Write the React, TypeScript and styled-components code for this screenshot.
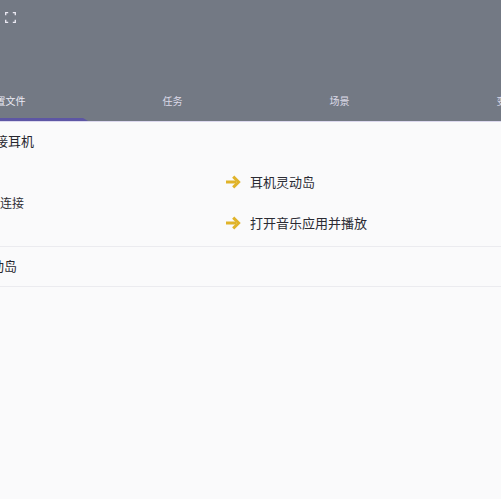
import React from "react";
import styled, { createGlobalStyle } from "styled-components";

const GlobalStyle = createGlobalStyle`
  html, body {
    margin: 0;
    padding: 0;
    background: #fafafb;
    overflow: hidden;
  }
  body {
    font-family: "Noto Sans CJK SC", "Noto Sans", sans-serif;
    color: #2b2b33;
  }
`;

const Page = styled.div`
  width: 501px;
  height: 499px;
  overflow: hidden;
  background: #fafafb;
`;

const Header = styled.header`
  height: 121px;
  background: #737984;
  border-bottom: 1px solid #dcd8ee;
  display: flex;
  flex-direction: column;
`;

const TopBar = styled.div`
  padding: 12px 0 0 5px;
  flex: 1;
`;

const IconButton = styled.div`
  width: 11px;
  height: 11px;
  display: flex;
`;

const Tabs = styled.nav`
  display: flex;
  margin-left: -78px;
`;

const Tab = styled.div<{ $active?: boolean }>`
  position: relative;
  flex: 0 0 167px;
  height: 38px;
  box-sizing: border-box;
  padding-bottom: 4px;
  display: flex;
  align-items: center;
  justify-content: center;
  font-size: 10px;
  color: ${(p) => (p.$active ? "#ecebf5" : "#dcd9e8")};
  &::after {
    content: "";
    display: ${(p) => (p.$active ? "block" : "none")};
    position: absolute;
    left: 0;
    bottom: 0;
    width: 166px;
    height: 3px;
    background: #5d56a4;
    clip-path: polygon(0 0, 97% 0, 100% 100%, 0 100%);
  }
`;

const Content = styled.main`
  margin-left: -41px;
`;

const Section = styled.section<{ $pb: number }>`
  padding: 9px 0 ${(p) => p.$pb}px;
  border-bottom: 1px solid #ebebef;
`;

const Title = styled.div<{ $indent?: number }>`
  font-size: 13px;
  line-height: 20px;
  color: #26262e;
  margin-left: ${(p) => p.$indent ?? 0}px;
`;

const Body = styled.div`
  display: flex;
  margin-top: 10px;
`;

const LeftCol = styled.div`
  width: 267px;
  display: flex;
  align-items: center;
  padding-left: 17px;
  box-sizing: border-box;
  font-size: 12px;
  color: #2e2e36;
`;

const ActionList = styled.div`
  display: flex;
  flex-direction: column;
`;

const Action = styled.div`
  height: 41px;
  display: flex;
  align-items: center;
  gap: 9px;
  font-size: 13px;
  color: #2b2b33;
`;

const CornersIcon = () => (
  <svg width="11" height="11" viewBox="0 0 11 11" fill="none" stroke="#eceaf4" strokeWidth="1.3">
    <path d="M0.7 3.2 V0.7 H3.2" />
    <path d="M7.8 0.7 H10.3 V3.2" />
    <path d="M0.7 7.8 V10.3 H3.2" />
    <path d="M7.8 10.3 H10.3 V7.8" />
  </svg>
);

const ArrowIcon = () => (
  <svg width="15" height="14" viewBox="0 0 15 14" fill="none">
    <rect x="0" y="5.5" width="10" height="3" fill="#e0b32a" />
    <path d="M7.2 1.6 L12.6 7 L7.2 12.4" stroke="#e0b32a" strokeWidth="3" strokeLinejoin="miter" />
  </svg>
);

export default function App() {
  const tabs = ["配置文件", "任务", "场景", "变量"];
  return (
    <Page>
      <GlobalStyle />
      <Header>
        <TopBar>
          <IconButton>
            <CornersIcon />
          </IconButton>
        </TopBar>
        <Tabs>
          {tabs.map((t, i) => (
            <Tab key={t} $active={i === 0}>
              {t}
            </Tab>
          ))}
        </Tabs>
      </Header>
      <Content>
        <Section $pb={3}>
          <Title $indent={-3}>蓝牙连接耳机</Title>
          <Body>
            <LeftCol>自动连接</LeftCol>
            <ActionList>
              <Action>
                <ArrowIcon />
                耳机灵动岛
              </Action>
              <Action>
                <ArrowIcon />
                打开音乐应用并播放
              </Action>
            </ActionList>
          </Body>
        </Section>
        <Section $pb={10}>
          <Title $indent={-7}>耳机灵动岛</Title>
        </Section>
      </Content>
    </Page>
  );
}
